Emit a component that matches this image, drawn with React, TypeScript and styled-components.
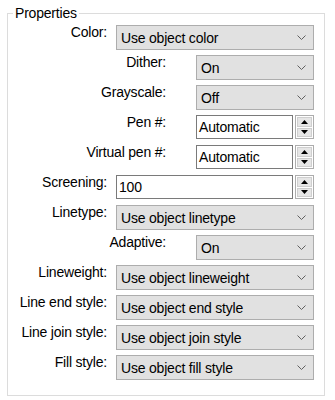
import styled, { createGlobalStyle } from "styled-components";

const GlobalStyle = createGlobalStyle`
  body {
    margin: 0;
    background: #ffffff;
    font-family: "Liberation Sans", Arial, sans-serif;
    font-size: 14px;
    color: #000000;
  }
`;

const Page = styled.div`
  width: 335px;
  height: 400px;
  padding: 5px 0 0 7px;
  box-sizing: border-box;
`;

const GroupBox = styled.fieldset`
  margin: 0;
  width: 318px;
  box-sizing: border-box;
  border: 1px solid #dcdcdc;
  padding: 4px 10px 15px 0;
  display: flex;
  flex-direction: column;
  gap: 5px;
`;

const Legend = styled.legend`
  margin-left: 5px;
  padding: 0 2px;
  font-size: 14px;
  line-height: 16px;
  letter-spacing: -0.2px;
`;

const Row = styled.div<{ $indent: boolean }>`
  display: grid;
  grid-template-columns: ${(p) => (p.$indent ? "158px 1fr" : "99px 1fr")};
  column-gap: ${(p) => (p.$indent ? "30px" : "9px")};
  align-items: start;
  height: 25px;
`;

const Label = styled.label`
  text-align: right;
  line-height: 16px;
  white-space: nowrap;
  letter-spacing: -0.2px;
  margin-top: -1px;
`;

const Combo = styled.div`
  height: 25px;
  box-sizing: border-box;
  border: 1px solid #adadad;
  background: #e1e1e1;
  display: flex;
  align-items: center;
  justify-content: space-between;
  padding: 0 7px 0 4px;
  line-height: 16px;
  letter-spacing: -0.2px;
`;

const Spin = styled.div`
  display: flex;
  gap: 2px;
  height: 24px;
`;

const Edit = styled.div`
  flex: 1;
  box-sizing: border-box;
  border: 1px solid #7a7a7a;
  background: #ffffff;
  display: flex;
  align-items: center;
  padding: 0 2px;
  line-height: 16px;
  letter-spacing: -0.2px;
`;

const SpinButtons = styled.div`
  width: 19px;
  box-sizing: border-box;
  border: 1px solid #adadad;
  padding: 1px;
  display: flex;
  flex-direction: column;
  gap: 1px;
`;

const SpinButton = styled.div`
  flex: 1;
  background: #e6e6e6;
  border: 1px solid #cfcfcf;
  display: flex;
  align-items: center;
  justify-content: center;
`;

const Chevron = () => (
  <svg width="9" height="5" viewBox="0 0 9 5">
    <path d="M0.5 0.5 L4.5 4.5 L8.5 0.5" fill="none" stroke="#606060" strokeWidth="1" />
  </svg>
);

const Arrow = ({ up }: { up: boolean }) => (
  <svg width="7" height="4" viewBox="0 0 7 4">
    <path d={up ? "M0 4 L3.5 0 L7 4 Z" : "M0 0 L3.5 4 L7 0 Z"} fill="#000" />
  </svg>
);

type Field = { label: string; value: string; kind: "combo" | "spin"; indent?: boolean };

const fields: Field[] = [
  { label: "Color:", value: "Use object color", kind: "combo" },
  { label: "Dither:", value: "On", kind: "combo", indent: true },
  { label: "Grayscale:", value: "Off", kind: "combo", indent: true },
  { label: "Pen #:", value: "Automatic", kind: "spin", indent: true },
  { label: "Virtual pen #:", value: "Automatic", kind: "spin", indent: true },
  { label: "Screening:", value: "100", kind: "spin" },
  { label: "Linetype:", value: "Use object linetype", kind: "combo" },
  { label: "Adaptive:", value: "On", kind: "combo", indent: true },
  { label: "Lineweight:", value: "Use object lineweight", kind: "combo" },
  { label: "Line end style:", value: "Use object end style", kind: "combo" },
  { label: "Line join style:", value: "Use object join style", kind: "combo" },
  { label: "Fill style:", value: "Use object fill style", kind: "combo" },
];

export default function App() {
  return (
    <Page>
      <GlobalStyle />
      <GroupBox>
        <Legend>Properties</Legend>
        {fields.map((f) => (
          <Row key={f.label} $indent={!!f.indent}>
            <Label>{f.label}</Label>
            {f.kind === "combo" ? (
              <Combo>
                <span>{f.value}</span>
                <Chevron />
              </Combo>
            ) : (
              <Spin>
                <Edit>{f.value}</Edit>
                <SpinButtons>
                  <SpinButton>
                    <Arrow up />
                  </SpinButton>
                  <SpinButton>
                    <Arrow up={false} />
                  </SpinButton>
                </SpinButtons>
              </Spin>
            )}
          </Row>
        ))}
      </GroupBox>
    </Page>
  );
}
